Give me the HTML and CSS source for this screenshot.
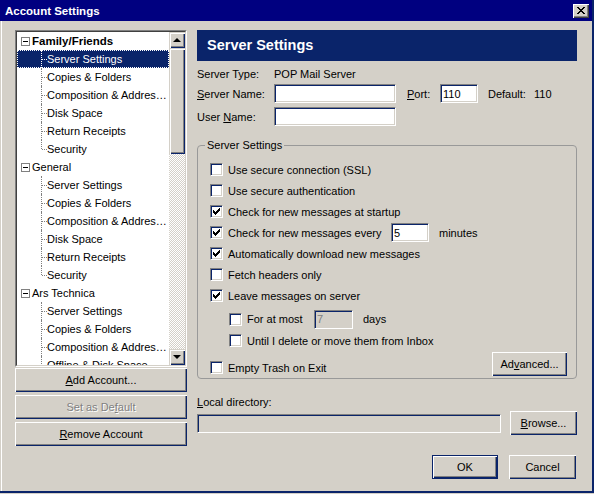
FILE: index.html
```html
<!DOCTYPE html>
<html lang="en">
<head>
    <meta charset="UTF-8">
    <title>Account Settings</title>
    <link rel="stylesheet" href="styles.css">
</head>
<body>
    <div class="window">
        <div class="titlebar">
            <span class="title">Account Settings</span>
            <span class="close">
                <svg width="8" height="7" viewBox="0 0 8 7" shape-rendering="crispEdges">
                    <path d="M0 0h2v1h-2z M6 0h2v1h-2z M1 1h2v1h-2z M5 1h2v1h-2z M2 2h4v1h-4z M3 3h2v1h-2z M2 4h4v1h-4z M1 5h2v1h-2z M5 5h2v1h-2z M0 6h2v1h-2z M6 6h2v1h-2z" fill="#000"/>
                </svg>
            </span>
        </div>

        <div class="main">
            <div class="left">
                <div class="tree">
                    <div class="tree-body">
                        <div class="tree-list">
                            <div class="node group bold"><span class="expander"></span>Family/Friends</div>
                            <div class="node child selected">Server Settings</div>
                            <div class="node child">Copies &amp; Folders</div>
                            <div class="node child">Composition &amp; Addresses</div>
                            <div class="node child">Disk Space</div>
                            <div class="node child">Return Receipts</div>
                            <div class="node child last">Security</div>
                            <div class="node group"><span class="expander"></span>General</div>
                            <div class="node child">Server Settings</div>
                            <div class="node child">Copies &amp; Folders</div>
                            <div class="node child">Composition &amp; Addresses</div>
                            <div class="node child">Disk Space</div>
                            <div class="node child">Return Receipts</div>
                            <div class="node child last">Security</div>
                            <div class="node group"><span class="expander"></span>Ars Technica</div>
                            <div class="node child">Server Settings</div>
                            <div class="node child">Copies &amp; Folders</div>
                            <div class="node child">Composition &amp; Addresses</div>
                            <div class="node child">Offline &amp; Disk Space</div>
                            <div class="node child">Return Receipts</div>
                            <div class="node child last">Security</div>
                        </div>
                        <div class="scrollbar">
                            <div class="sb-btn up"></div>
                            <div class="sb-thumb"></div>
                            <div class="sb-track"></div>
                            <div class="sb-btn down"></div>
                        </div>
                    </div>
                </div>
                <button class="btn side-btn first"><u>A</u>dd Account...</button>
                <button class="btn side-btn disabled">Set as De<u>f</u>ault</button>
                <button class="btn side-btn"><u>R</u>emove Account</button>
            </div>

            <div class="right">
                <div class="panel-header">Server Settings</div>

                <div class="info-row type-row">
                    <span class="lbl">Server Type:</span>
                    <span>POP Mail Server</span>
                </div>
                <div class="info-row">
                    <span class="lbl"><u>S</u>erver Name:</span>
                    <input class="field name-field" type="text">
                    <span class="port-lbl"><u>P</u>ort:</span>
                    <input class="field port-field" type="text" value="110">
                    <span class="default-lbl">Default:</span>
                    <span>110</span>
                </div>
                <div class="info-row user-row">
                    <span class="lbl">User <u>N</u>ame:</span>
                    <input class="field name-field" type="text">
                </div>

                <fieldset class="group-box">
                    <legend>Server Settings</legend>
                    <div class="check-row"><span class="cb"></span><span>Use secure connection (SSL)</span></div>
                    <div class="check-row"><span class="cb"></span><span>Use secure authentication</span></div>
                    <div class="check-row">
                        <span class="cb"><svg width="7" height="7" viewBox="0 0 7 7" shape-rendering="crispEdges"><path d="M6 0h1v1h-1z M5 1h2v1h-2z M0 2h1v1h-1z M4 2h3v1h-3z M0 3h2v1h-2z M3 3h3v1h-3z M0 4h5v1h-5z M1 5h3v1h-3z M2 6h1v1h-1z"/></svg></span>
                        <span>Check for new messages at startup</span>
                    </div>
                    <div class="check-row">
                        <span class="cb"><svg width="7" height="7" viewBox="0 0 7 7" shape-rendering="crispEdges"><path d="M6 0h1v1h-1z M5 1h2v1h-2z M0 2h1v1h-1z M4 2h3v1h-3z M0 3h2v1h-2z M3 3h3v1h-3z M0 4h5v1h-5z M1 5h3v1h-3z M2 6h1v1h-1z"/></svg></span>
                        <span class="every-text">Check for new messages every</span>
                        <input class="field small-field" type="text" value="5">
                        <span class="unit">minutes</span>
                    </div>
                    <div class="check-row">
                        <span class="cb"><svg width="7" height="7" viewBox="0 0 7 7" shape-rendering="crispEdges"><path d="M6 0h1v1h-1z M5 1h2v1h-2z M0 2h1v1h-1z M4 2h3v1h-3z M0 3h2v1h-2z M3 3h3v1h-3z M0 4h5v1h-5z M1 5h3v1h-3z M2 6h1v1h-1z"/></svg></span>
                        <span>Automatically download new messages</span>
                    </div>
                    <div class="check-row"><span class="cb"></span><span>Fetch headers only</span></div>
                    <div class="check-row">
                        <span class="cb"><svg width="7" height="7" viewBox="0 0 7 7" shape-rendering="crispEdges"><path d="M6 0h1v1h-1z M5 1h2v1h-2z M0 2h1v1h-1z M4 2h3v1h-3z M0 3h2v1h-2z M3 3h3v1h-3z M0 4h5v1h-5z M1 5h3v1h-3z M2 6h1v1h-1z"/></svg></span>
                        <span>Leave messages on server</span>
                    </div>
                    <div class="check-row nested days-row">
                        <span class="cb"></span>
                        <span class="most-text">For at most</span>
                        <input class="field small-field days-field" type="text" value="7" disabled>
                        <span class="unit">days</span>
                    </div>
                    <div class="check-row nested"><span class="cb"></span><span>Until I delete or move them from Inbox</span></div>
                    <div class="last-row">
                        <div class="check-row trash"><span class="cb"></span><span>Empty Trash on Exit</span></div>
                        <button class="btn advanced">Ad<u>v</u>anced...</button>
                    </div>
                </fieldset>

                <div class="local-lbl"><u>L</u>ocal directory:</div>
                <div class="local-row">
                    <input class="field dir-field" type="text" disabled>
                    <button class="btn browse"><u>B</u>rowse...</button>
                </div>

                <div class="dialog-buttons">
                    <button class="btn default ok">OK</button>
                    <button class="btn cancel">Cancel</button>
                </div>
            </div>
        </div>
    </div>
</body>
</html>
```

FILE: styles.css
```css
body {
    margin: 0;
    background-color: #d4d0c8;
    font-family: "Liberation Sans", Arial, sans-serif;
    font-size: 11px;
    color: #000;
}

u {
    text-decoration: underline;
    text-underline-offset: 1px;
}

.window {
    width: 594px;
    height: 493px;
    box-sizing: border-box;
    border-right: 2px solid #0a246a;
    border-bottom: 2px solid #0a246a;
    display: flex;
    flex-direction: column;
}

.titlebar {
    height: 21px;
    flex-shrink: 0;
    background-color: #000080;
    color: white;
    display: flex;
    align-items: center;
    justify-content: space-between;
    padding: 0 3px 0 5px;
}

.title {
    font-weight: bold;
    font-size: 11.5px;
}

.close {
    width: 16px;
    height: 14px;
    box-sizing: border-box;
    background-color: #d4d0c8;
    box-shadow: inset 1px 1px #fff, inset -1px -1px #404040, inset -2px -2px #808080;
    display: flex;
    align-items: center;
    justify-content: center;
}

.main {
    flex: 1;
    display: flex;
    gap: 10px;
    margin-left: 1px;
    border-left: 1px solid #fff;
    padding: 9px 0 0 13px;
}

/* left column: account tree */

.left {
    width: 172px;
    display: flex;
    flex-direction: column;
}

.tree {
    height: 337px;
    box-sizing: border-box;
    border: 1px solid;
    border-color: #808080 #fff #fff #808080;
    display: flex;
}

.tree-body {
    flex: 1;
    display: flex;
    border: 1px solid;
    border-color: #404040 #d4d0c8 #d4d0c8 #404040;
    background-color: #fff;
    min-width: 0;
}

.tree-list {
    flex: 1;
    min-width: 0;
    overflow: hidden;
}

.node {
    position: relative;
    height: 18px;
    line-height: 18px;
    white-space: nowrap;
    overflow: hidden;
    text-overflow: ellipsis;
}

.node.bold {
    font-weight: bold;
    font-size: 11.5px;
}

.expander {
    display: inline-block;
    position: relative;
    width: 9px;
    height: 9px;
    box-sizing: border-box;
    border: 1px solid #808080;
    background-color: #fff;
    margin: 0 2px 0 4px;
    vertical-align: -1px;
}

.expander::after {
    content: "";
    position: absolute;
    left: 1px;
    top: 3px;
    width: 5px;
    height: 1px;
    background-color: #000;
}

.child {
    padding-left: 30px;
}

.child::before {
    content: "";
    position: absolute;
    left: 24px;
    top: 0;
    height: 18px;
    border-left: 1px dotted #808080;
}

.child.last::before {
    height: 9px;
}

.child::after {
    content: "";
    position: absolute;
    left: 25px;
    top: 9px;
    width: 5px;
    border-top: 1px dotted #808080;
}

.selected {
    background-color: #0a246a;
    color: #fff;
    outline: 1px dotted #fff;
    outline-offset: -1px;
}

.selected::before,
.selected::after {
    border-color: #fff;
}

.scrollbar {
    width: 16px;
    flex-shrink: 0;
    display: flex;
    flex-direction: column;
}

.sb-btn,
.sb-thumb {
    background-color: #d4d0c8;
    box-shadow: inset 1px 1px #d4d0c8, inset 2px 2px #fff, inset -1px -1px #0a246a, inset -2px -2px #808080;
}

.sb-btn {
    height: 16px;
    display: flex;
    align-items: center;
    justify-content: center;
}

.sb-btn.up::after {
    content: "";
    border-left: 4px solid transparent;
    border-right: 4px solid transparent;
    border-bottom: 4px solid #000;
}

.sb-btn.down::after {
    content: "";
    border-left: 4px solid transparent;
    border-right: 4px solid transparent;
    border-top: 4px solid #000;
}

.sb-thumb {
    height: 106px;
}

.sb-track {
    flex: 1;
    background: repeating-conic-gradient(#fff 0 25%, #d4d0c8 0 50%) 0 0 / 2px 2px;
}

/* buttons */

.btn {
    font: inherit;
    color: #000;
    height: 24px;
    padding: 0;
    border: none;
    background-color: #d4d0c8;
    box-shadow: inset 1px 1px #fff, inset -1px -1px #0a246a, inset -2px -2px #808080;
}

.btn.default {
    box-shadow: inset 0 0 0 1px #0a246a, inset 2px 2px #fff, inset -2px -2px #0a246a, inset -3px -3px #808080;
}

.side-btn {
    width: 172px;
    margin-top: 3px;
}

.side-btn.first {
    margin-top: 1px;
}

.side-btn.disabled {
    color: #808080;
    text-shadow: 1px 1px #fff;
}

/* right column */

.right {
    width: 380px;
    display: flex;
    flex-direction: column;
}

.panel-header {
    height: 31px;
    line-height: 31px;
    background-color: #0a246a;
    color: #fff;
    font-weight: bold;
    font-size: 14.5px;
    padding-left: 10px;
}

.info-row {
    display: flex;
    align-items: center;
    height: 19px;
    margin-top: 1px;
}

.info-row.type-row {
    height: 18px;
    margin-top: 4px;
}

.info-row.user-row {
    margin-top: 4px;
}

.lbl {
    width: 77px;
    flex-shrink: 0;
}

.field {
    font: inherit;
    color: #000;
    height: 19px;
    box-sizing: border-box;
    padding: 0 2px;
    margin: 0;
    border: 1px solid;
    border-color: #808080 #fff #fff #808080;
    box-shadow: inset 1px 1px #0a246a, inset -1px -1px #d4d0c8;
    background-color: #fff;
    outline: none;
}

.field:disabled {
    background-color: #d4d0c8;
    color: #808080;
}

.name-field {
    width: 122px;
}

.port-lbl {
    margin-left: 11px;
    width: 33px;
}

.port-field {
    width: 38px;
}

.default-lbl {
    margin-left: 10px;
    width: 46px;
}

.group-box {
    margin: 12px 0 0;
    padding: 7px 9px 2px 12px;
    border: 1px solid #999;
    border-radius: 4px;
    min-width: 0;
}

.group-box legend {
    margin-left: -5px;
    padding: 0 2px;
    line-height: 14px;
}

.check-row {
    display: flex;
    align-items: center;
    height: 21px;
}

.check-row.nested {
    padding-left: 19px;
}

.check-row.days-row {
    margin-top: 2px;
    height: 22px;
}

.cb {
    width: 13px;
    height: 13px;
    flex-shrink: 0;
    box-sizing: border-box;
    margin-right: 5px;
    border: 1px solid;
    border-color: #808080 #fff #fff #808080;
    box-shadow: inset 1px 1px #0a246a, inset -1px -1px #d4d0c8;
    background-color: #fff;
    padding: 2px;
}

.cb svg {
    display: block;
}

.every-text {
    width: 163px;
}

.most-text {
    width: 67px;
}

.small-field {
    width: 38px;
}

.days-field {
    width: 39px;
}

.unit {
    margin-left: 10px;
}

.last-row {
    display: flex;
    justify-content: space-between;
    align-items: flex-end;
    margin-top: 1px;
    height: 24px;
}

.check-row.trash {
    height: 13px;
    margin-bottom: 2px;
}

.advanced {
    width: 75px;
}

.local-lbl {
    margin-top: 16px;
    height: 14px;
    line-height: 14px;
}

.local-row {
    display: flex;
    align-items: center;
    height: 24px;
    margin-top: 2px;
}

.dir-field {
    width: 304px;
}

.browse {
    width: 67px;
    margin-left: 9px;
}

.dialog-buttons {
    display: flex;
    justify-content: flex-end;
    gap: 11px;
    margin-top: 20px;
    margin-right: 1px;
}

.ok {
    width: 66px;
}

.cancel {
    width: 67px;
}
```
